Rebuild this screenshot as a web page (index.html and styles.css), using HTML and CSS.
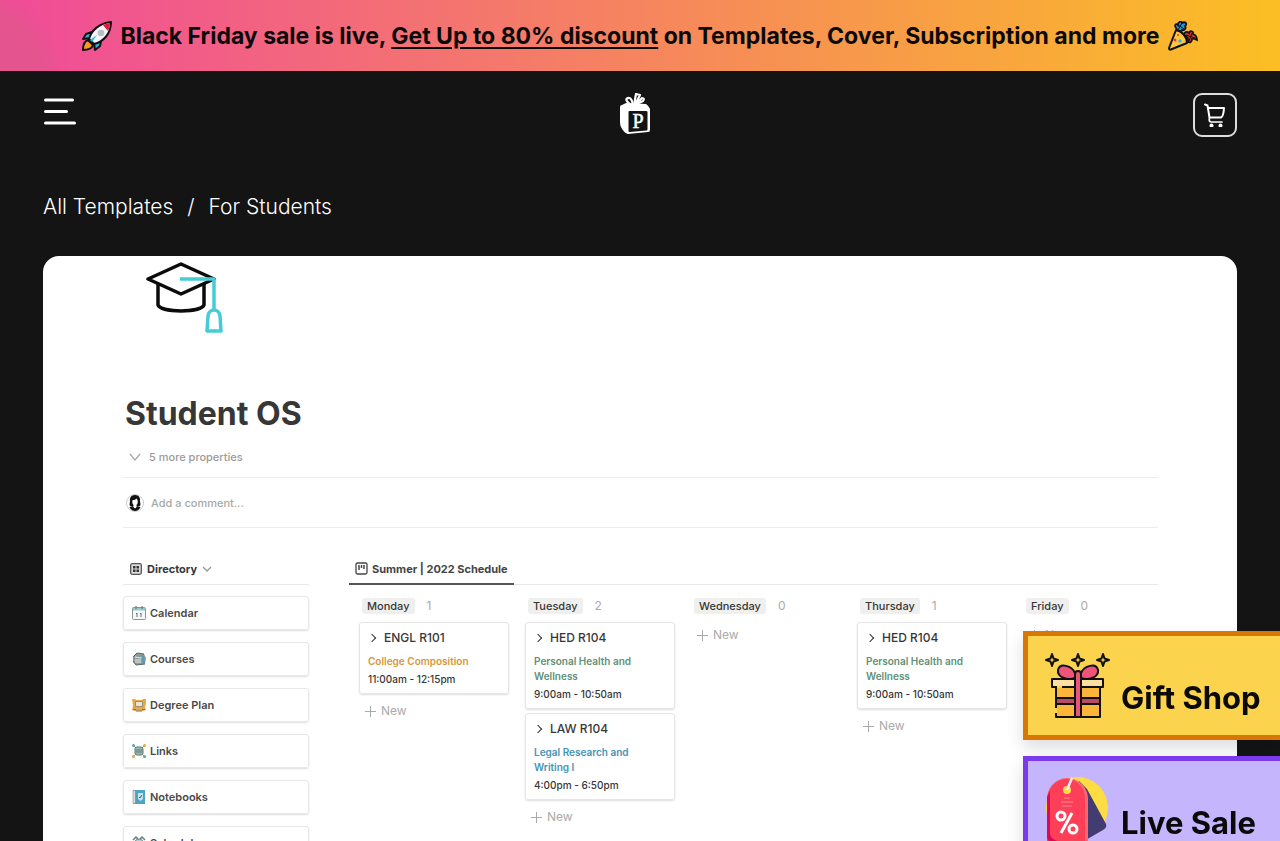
FILE: index.html
```html
<!DOCTYPE html>
<html lang="en">
<head>
<meta charset="utf-8">
<meta name="viewport" content="width=device-width, initial-scale=1">
<title>Student OS</title>
<link rel="stylesheet" href="styles.css">
</head>
<body>
<div class="banner">
  <svg class="emoji" viewBox="0 0 30 30" aria-hidden="true"><g stroke="#111" stroke-width="2" stroke-linejoin="round"><path d="M10 11 4 13 1 18l7-1z" fill="#29b6e8"/><path d="M19 20 18 25l-5 4-1-7z" fill="#29b6e8"/><path d="M6 19c-3 1-5 5-5 10 5 0 9-2 10-5z" fill="#f59a23"/><path d="M7 18C9 10 17 2 29 1c0 12-8 20-17 22z" fill="#f4f6f8"/></g><path d="M21 4c3-1 5-2 7-2 0 3-1 5-2 8z" fill="#e5173f"/><circle cx="19" cy="12" r="3.300" fill="#b9bec3"/><path d="m8 19 7-5-5 7z" fill="#29b6e8"/></svg>
  <p class="banner-text">Black Friday sale is live, <a href="#sale">Get Up to 80% discount</a> on Templates, Cover, Subscription and more</p>
  <svg class="emoji" viewBox="0 0 30 30" aria-hidden="true"><path d="M8 9c-2 5-5 13-7 18 0 2 1 2 3 1l15-6C19 16 14 10 8 9z" fill="#ffc83d" stroke="#111" stroke-width="2" stroke-linejoin="round"/><g stroke="#111" stroke-width="1.800"><path d="M8 7c-2-3 0-5 2-3 0-4 4-4 4-2 3-2 6 1 3 3 2 3-2 5-3 4-1 2-5 1-6-2z" fill="#2196e3"/><path d="M16 14c0-3 3-4 5-2 1-3 5-2 4 1 3 1 4 4 4 6-2-1-3-2-5-1 0 3-2 4-4 3 1-3-1-6-4-7z" fill="#d9352c"/></g><path d="m9 3 7 5M14 2l-4 7M18 14l9 3M24 12l-3 8" stroke="#111"/><circle cx="7" cy="19" r="1.500" fill="#e53935"/><circle cx="12" cy="20" r="1.700" fill="#29b6e8"/><circle cx="10" cy="14" r="1" fill="#e53935"/></svg>
</div>

<header class="header">
  <button class="icon-button menu" type="button" aria-label="Menu"><svg width="33" height="27" viewBox="0 0 33 27" stroke="#fff" stroke-width="3" stroke-linecap="round"><path d="M2.500 2h27M2.500 13.500h21M2.500 25h29"/></svg></button>
  <a class="logo" href="#home" aria-label="Home"><svg width="40" height="42" viewBox="0 0 40 42"><path d="M0 14q0-2 2-2l4-2 20 1q3 2 4 5v21q0 2-2 2l-20 2q-4-1-7-7-1-2-1-5z" fill="#fff"/><path d="M8.500 19q0-1 1-1H26q1.500 0 1.500 1v17.500q0 1-1 1L9.500 39q-1 0-1-1z" fill="#141414"/><g fill="none" stroke="#fff" stroke-width="2.200" stroke-linejoin="round"><path d="M13 13C8 10 5 7 7 5.500s5-1 6 7.500z"/><path d="m14 12 2-11 4 1-5 10 7-7q3 0 1 3l-8 4"/></g><text class="logo-letter" x="18" y="35" text-anchor="middle">P</text></svg></a>
  <button class="icon-button cart" type="button" aria-label="Cart"><svg width="22" height="24" viewBox="0 0 22 24" fill="none" stroke="#fff" stroke-width="2" stroke-linecap="round" stroke-linejoin="round"><path d="M1 1.500 3.500 2.500 5.500 14.500H17q2.500-1 3-9.500H4"/><path d="M5.500 15q-1 4 2 4H18" stroke-width="1.700"/><circle cx="7.500" cy="22.500" r="1" fill="#fff"/><circle cx="16.500" cy="22.500" r="1" fill="#fff"/></svg></button>
</header>

<main class="page">
  <nav class="crumbs" aria-label="Breadcrumb"><a href="#templates">All Templates</a><span>/</span><a href="#students">For Students</a></nav>

  <article class="preview">
    <svg class="cap" width="78" height="72" viewBox="0 0 78 72" fill="none" stroke-width="3.500" stroke-linejoin="round"><g stroke="#0b0b0b"><path d="M2 17 35 2l33 15-33 15z"/><path d="M12 22v21c4 8 42 8 46 0V22"/></g><path d="M34 17h34v31M61 69l1-15c1-8 11-8 12 0l1 15z" stroke="#45ccd6"/></svg>
    <h1 class="title">Student OS</h1>
    <button class="properties" type="button"><svg width="12" height="8" viewBox="0 0 12 8" fill="none" stroke="#aaa" stroke-width="1.300"><path d="m1 1 5 6 5-6"/></svg>5 more properties</button>
    <div class="comment">
      <svg width="18" height="18" viewBox="0 0 18 18"><circle cx="9" cy="9" r="8.500" fill="#fff" stroke="#ccc"/><path d="M9 1C5 1 3.500 4 4 7c0 2-1 3 0 5h10c1-2 0-3 0-5 .500-3-1-6-5-6z" fill="#111"/><path d="M3.500 13 7 12l2 2 2-2 3.500 1c-1 2.500-3 4-5.500 4s-4.500-1.500-5.500-4z" fill="#111"/><path d="M6.500 6c2 0 3-.500 4-1.500 1 1 1.500 2 1.200 4-.200 1.500-.700 2-1.200 2.500v2L9 14.500 7.500 13v-2C6.500 10 6 8 6.500 6z" fill="#fff"/></svg>
      <input type="text" aria-label="Add a comment" placeholder="Add a comment...">
    </div>

    <div class="workspace">
      <section class="directory">
        <button class="directory-head" type="button"><svg width="12" height="12" viewBox="0 0 12 12"><rect x=".700" y=".700" width="10.600" height="10.600" rx="1.500" fill="#ddd" stroke="#555" stroke-width="1.300"/><path d="M3 3h2.500v2.500H3zM6.500 3H9v2.500H6.500zM3 6.500h2.500V9H3zM6.500 6.500H9V9H6.500z" fill="#333"/></svg>Directory<svg width="10" height="7" viewBox="0 0 10 7" fill="none" stroke="#999" stroke-width="1.300"><path d="m1 1 4 4 4-4"/></svg></button>
        <ul class="links">
          <li><a href="#calendar"><svg viewBox="0 0 14 14"><rect x=".500" y="1.500" width="13" height="12" rx="1" fill="#f4f8f8" stroke="#8a9694"/><path d="M1 2h12v2.500H1z" fill="#9bc6ca"/><path d="M4 0v3M10 0v3M4 8l1-1v4M8 8l1-1v4" stroke="#66706f" fill="none"/></svg>Calendar</a></li>
          <li><a href="#courses"><svg viewBox="0 0 14 14"><path d="M1 5 5 1l7 1 2 4-1 6-9 1-3-3z" fill="#8f9b98"/><path d="m3 5 6 1 3-2M3 8h6M3 10h6" stroke="#e8efee" fill="none"/><path d="M9 3h3l1 8-2 1z" fill="#579fac"/><path d="m1 5 4-4 7 1M1 9l3 4 9-1" stroke="#5c6664" fill="none"/></svg>Courses</a></li>
          <li><a href="#degree"><svg viewBox="0 0 14 14"><path d="M0 1h3l1 1h6l1-1h3v5l-1 3 1 3-3 1H3l-3-1 1-4z" fill="#e3a94c"/><rect x="3.500" y="3.500" width="7" height="5" fill="#e6e3d8" stroke="#a28d68"/><path d="M1 11.500h3M10 11.500h3M4 13h6" stroke="#7c7768"/></svg>Degree Plan</a></li>
          <li><a href="#links"><svg viewBox="0 0 14 14"><path d="m1 1 12 12M13 1 1 13" stroke="#999"/><rect x="3" y="3" width="8" height="8" rx="2" fill="#9bbab4" stroke="#5e7772"/><path d="M4 6h6M4 8h6" stroke="#5e7772"/><circle cx="1.500" cy="1.500" r="1.500" fill="#51a6b9"/><circle cx="12.500" cy="1.500" r="1.500" fill="#dba64e"/><circle cx="1.500" cy="12.500" r="1.500" fill="#dba64e"/><circle cx="12.500" cy="12.500" r="1.500" fill="#51a6b9"/></svg>Links</a></li>
          <li><a href="#notebooks"><svg viewBox="0 0 14 14"><path d="M1 0h12v14H1z" fill="#4fa3c3"/><path d="M1 .500h2.500v13H1z" fill="#d8dedd" stroke="#777" stroke-width=".500"/><path d="M6 3h5v6L8.500 11 6 9z" fill="#c3e3ed"/><path d="m7 7 1 1 2-3" stroke="#276c8c" fill="none"/></svg>Notebooks</a></li>
          <li><a href="#schedule"><svg viewBox="0 0 14 14"><circle cx="7" cy="8" r="5" fill="#a9d3d7" stroke="#67817f"/><path d="m1 4 3-3 2 2M8 3l2-2 3 3M7 5v3l2 2" stroke="#72807e" fill="none" stroke-width="1.500"/></svg>Schedule</a></li>
        </ul>
      </section>

      <section class="schedule">
        <div class="tabs"><button class="tab" type="button"><svg width="13" height="13" viewBox="0 0 13 13" fill="none" stroke="#444"><rect x="1" y="1" width="11" height="11" rx="1.500" stroke-width="1.300"/><path d="M4 3v5M6.500 3v3M9 3v4" stroke-width="1.500"/></svg>Summer | 2022 Schedule</button></div>
        <div class="board">
          <section class="day">
            <h2><span>Monday</span><small>1</small></h2>
            <div class="cards"><article class="card"><h3>ENGL R101</h3><p class="course gold">College Composition</p><p class="time">11:00am - 12:15pm</p></article></div>
            <button class="new" type="button">New</button>
          </section>
          <section class="day">
            <h2><span>Tuesday</span><small>2</small></h2>
            <div class="cards"><article class="card"><h3>HED R104</h3><p class="course green">Personal Health and Wellness</p><p class="time">9:00am - 10:50am</p></article>
            <article class="card"><h3>LAW R104</h3><p class="course blue">Legal Research and Writing I</p><p class="time">4:00pm - 6:50pm</p></article></div>
            <button class="new" type="button">New</button>
          </section>
          <section class="day">
            <h2><span>Wednesday</span><small>0</small></h2>
            <button class="new" type="button">New</button>
          </section>
          <section class="day">
            <h2><span>Thursday</span><small>1</small></h2>
            <div class="cards"><article class="card"><h3>HED R104</h3><p class="course green">Personal Health and Wellness</p><p class="time">9:00am - 10:50am</p></article></div>
            <button class="new" type="button">New</button>
          </section>
          <section class="day">
            <h2><span>Friday</span><small>0</small></h2>
            <button class="new" type="button">New</button>
          </section>
        </div>
      </section>
    </div>
  </article>
</main>

<aside class="promos">
  <a class="promo gift" href="#gift"><svg width="66" height="68" viewBox="0 0 66 68" stroke="#111" stroke-width="2" stroke-linejoin="round"><g fill="#fcd34d"><path d="M7 2 8.500 6.500 13 8 8.500 9.500 7 14 5.500 9.500 1 8l4.500-1.500zM33 2l1.500 4.500L39 8l-4.500 1.500L33 14l-1.500-4.500L27 8l4.500-1.500zM58 2l1.500 4.500L64 8l-4.500 1.500L58 14l-1.500-4.500L52 8l4.500-1.500z"/></g><path d="M11 34h44v31H11z" fill="#fbb63a"/><path d="M11 46h44v6H11z" fill="#b94c64"/><path d="M7 27h51v8H7z" fill="#fde0a0"/><path d="M30 26C22 29 12 25 13 18c2-8 14-4 17 3M36 26c8 3 18-1 17-8-2-8-14-4-17 3" fill="#ef5579"/><path d="M30 27v-5c0-4 6-4 6 0v43h-6z" fill="#e85575"/><path d="M12 35h5M11 56v5" stroke="#fcd34d"/></svg><span>Gift Shop</span></a>
  <a class="promo sale" href="#sale"><svg width="66" height="68" viewBox="0 0 66 68"><circle cx="32" cy="31" r="31" fill="#ffdc42"/><path d="m34 4 8 8 19 35c1 3-1 5-3 6L39 64z" fill="#423c70"/><path d="M2 64V22C3 6 15 1 22 1c11 0 21 9 21 21v42z" fill="#ff6672"/><path d="M2 64V22C3 7 15 2 21 2c11 0 19 9 19 20v42z" fill="#ff3f57"/><path d="M2 60V20l3-6v42c0 4 3 6 7 8H5c-2 0-3-2-3-4z" fill="#df0857"/><circle cx="22" cy="13" r="4" fill="#ffdc42"/><path d="m22 13 5-12" stroke="#f7eaf5" stroke-width="2.500"/><path d="M19 21h6M16 25h12M17 29h10" stroke="#ff8993"/><g fill="none" stroke="#fff" stroke-width="3"><circle cx="16" cy="39" r="4"/><circle cx="28" cy="52" r="4"/><path d="M27 36 16 56"/></g></svg><span>Live Sale</span></a>
</aside>
</body>
</html>
```

FILE: styles.css
```css
* { box-sizing: border-box; }
body { margin: 0; background: #141414; color: #fff; font-family: Inter, "Open Sans", sans-serif; }
a { color: inherit; text-decoration: none; }
button { margin: 0; padding: 0; border: 0; background: none; color: inherit; font: inherit; cursor: pointer; }
h1, h2, h3, p, ul { margin: 0; padding: 0; }
svg { display: block; flex: none; }

.banner { display: flex; align-items: center; justify-content: center; gap: 8px; min-height: 71px; padding: 0 16px; color: #0a0a0a; background: radial-gradient(circle at -30px 80px, #e4548f 0 72px, transparent 94px), linear-gradient(90deg, #f04b99, #fbbf24); }
.banner-text { font-size: 23px; font-weight: 700; line-height: 32px; }
.banner-text a { text-decoration: underline; text-decoration-thickness: 2px; text-underline-offset: 3px; }
.emoji { width: 30px; height: 30px; }

.header { display: grid; grid-template-columns: 1fr auto 1fr; align-items: start; padding: 22px 43px 55px; }
.menu { justify-self: start; padding-top: 5px; }
.logo-letter { fill: #fff; stroke: #fff; stroke-width: 0.5px; font: 20px "Liberation Serif", serif; }
.cart { display: grid; place-items: center; justify-self: end; width: 44px; height: 44px; border: 2px solid #ddd; border-radius: 9px; }

.page { padding: 0 43px 60px; }
.crumbs { display: flex; gap: 14px; font-size: 21px; font-weight: 300; line-height: 30px; margin-bottom: 34px; }

.preview { padding: 6px 79px 40px 80px; border-radius: 16px; background: #fff; color: #373737; overflow: hidden; }
.cap { margin-left: 23px; }
.title { margin: 60px 0 13px 2px; font-size: 32px; font-weight: 700; line-height: 40px; }
.properties { display: flex; align-items: center; gap: 8px; margin: 0 0 10px 6px; color: #9b9b99; font-size: 11px; font-weight: 500; line-height: 20px; }
.comment { display: flex; align-items: center; gap: 7px; padding: 16px 3px 15px; border: solid #ececec; border-width: 1px 0; }
.comment input { flex: 1; height: 18px; padding: 0; border: 0; outline: 0; font: 500 11px Inter, sans-serif; }
.comment input::placeholder { color: #a9a9a7; opacity: 1; }

.workspace { display: grid; grid-template-columns: 186px minmax(0, 1fr); gap: 40px; padding-top: 26px; font-size: 11px; }
.directory-head { display: flex; align-items: center; gap: 5px; width: 100%; height: 31px; padding: 0 7px; border-bottom: 1px solid #e8e8e8; font-weight: 700; }
.links { display: grid; gap: 12px; padding-top: 11px; list-style: none; }
.links a { display: flex; align-items: center; gap: 4px; height: 34px; padding: 0 8px; border: 1px solid #e8e8e8; border-radius: 3px; box-shadow: 0 1px 2px #0002; font-weight: 600; color: #4a4a48; }
.links svg { width: 14px; height: 14px; }

.tabs { height: 31px; border-bottom: 1px solid #e8e8e8; }
.tab { display: flex; align-items: center; gap: 4px; height: 31px; padding: 0 6px; border-bottom: 2px solid #555; font-weight: 700; color: #444; }
.board { display: grid; grid-auto-flow: column; grid-auto-columns: 150px; gap: 16px; padding: 13px 0 4px 10px; overflow: hidden; }
.day h2 { display: flex; align-items: center; gap: 12px; padding-left: 3px; margin-bottom: 8px; font-size: 11px; font-weight: 500; line-height: 16px; }
.day h2 span { padding: 0 5px; border-radius: 3px; background: #efefee; }
.day h2 small { font-size: 12px; font-weight: 400; color: #aaa; }
.day h2 + .new { padding-top: 5px; }
.cards { display: grid; gap: 4px; margin-bottom: 9px; }
.card { padding: 7px 8px 6px; border: 1px solid #e6e6e6; border-radius: 3px; box-shadow: 0 1px 2px #0002; font-size: 10px; line-height: 15px; }
.card h3 { display: flex; align-items: center; gap: 9px; margin-bottom: 8px; padding-left: 1px; font-size: 12px; font-weight: 500; line-height: 16px; }
.card h3::before { content: ""; width: 5px; height: 5px; border: solid #333; border-width: 1px 1px 0 0; transform: rotate(45deg); }
.course { margin-bottom: 3px; font-weight: 600; }
.time { font-weight: 500; }
.gold { color: #d5973c; }
.green { color: #629078; }
.blue { color: #4594b5; }
.new { display: flex; align-items: center; gap: 5px; padding-left: 6px; color: #aaa; font-size: 12px; line-height: 16px; }
.new::before { content: ""; width: 11px; height: 11px; background: linear-gradient(#aaa, #aaa) center / 11px 1px no-repeat, linear-gradient(#aaa, #aaa) center / 1px 11px no-repeat; }

.promos { position: fixed; top: 631px; right: 0; display: grid; gap: 16px; width: 257px; color: #0a0a0a; }
.promo { display: flex; align-items: center; gap: 10px; height: 109px; padding-left: 17px; border: 5px solid; border-right: 0; box-shadow: 0 8px 16px #0002; font-size: 31px; font-weight: 700; white-space: nowrap; }
.promo span { padding-top: 23px; }
.gift { border-color: #d97706; background: #fcd34d; }
.sale { border-color: #7c3aed; background: #c4b5fd; }
```
